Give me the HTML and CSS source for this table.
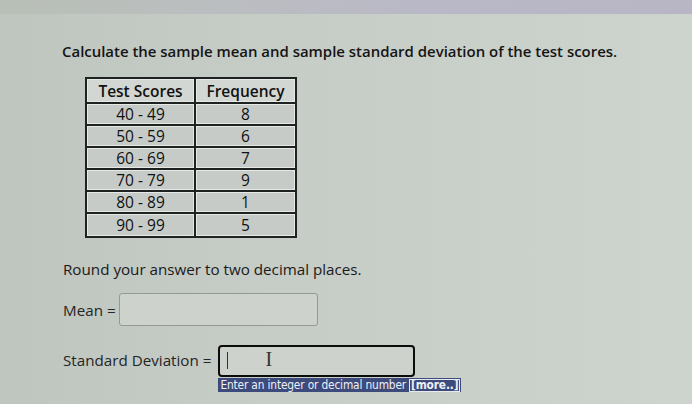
FILE: index.html
```html
<!DOCTYPE html>
<html>
<head>
<meta charset="utf-8">
<link rel="stylesheet" href="styles.css">
</head>
<body>
<div class="topbar"></div>
<main class="page">
  <p class="title">Calculate the sample mean and sample standard deviation of the test scores.</p>
  <table class="freq">
    <thead>
      <tr><th>Test Scores</th><th>Frequency</th></tr>
    </thead>
    <tbody>
      <tr><td>40 - 49</td><td>8</td></tr>
      <tr><td>50 - 59</td><td>6</td></tr>
      <tr><td>60 - 69</td><td>7</td></tr>
      <tr><td>70 - 79</td><td>9</td></tr>
      <tr><td>80 - 89</td><td>1</td></tr>
      <tr><td>90 - 99</td><td>5</td></tr>
    </tbody>
  </table>
  <p class="round">Round your answer to two decimal places.</p>
  <div class="row mean-row">
    <span class="label">Mean =</span>
    <div class="box mean-box"></div>
  </div>
  <div class="row sd-row">
    <span class="label">Standard Deviation =</span>
    <div class="sd-wrap">
      <div class="box sd-box"><span class="caret"></span><span class="ibeam">I</span></div>
      <div class="tip"><span class="tip-text">Enter an integer or decimal number</span><span class="more">[more..]</span></div>
    </div>
  </div>
</main>
</body>
</html>
```

FILE: styles.css
```css
html, body {
  margin: 0;
  padding: 0;
}
body {
  width: 692px;
  height: 404px;
  overflow: hidden;
  background: linear-gradient(90deg, #bfc6bf 0%, #c6ccc6 40%, #cdd3cd 100%);
  font-family: "Open Sans", "Noto Sans", sans-serif;
  color: #161616;
}
.topbar {
  height: 14px;
  background: linear-gradient(90deg, #b8bfb6 0%, #bbbec0 30%, #b9b8c6 60%, #b8b6c4 100%);
}
.page {
  padding: 0 0 0 62px;
}
.title {
  margin: 0;
  padding-top: 27px;
  font-size: 14.95px;
  line-height: 20px;
  font-weight: 600;
  color: #151515;
}
.freq {
  margin: 16px 0 0 23px;
  border-collapse: separate;
  border-spacing: 2px;
  background: #1e2220;
  font-size: 15.5px;
  line-height: 17px;
}
.freq th, .freq td {
  background: #c6cbc8;
  border: 1px solid #e6e9e6;
  text-align: center;
  padding: 1px 0 0;
  height: 17px;
  font-weight: 500;
  color: #111;
}
.freq th {
  background: #d3d7d3;
  font-weight: 600;
  height: 20px;
}
.freq tbody tr:last-child td {
  height: 19px;
}
.freq th:first-child, .freq td:first-child {
  width: 105px;
}
.freq th:last-child, .freq td:last-child {
  width: 97px;
}
.round {
  margin: 21px 0 0 1px;
  font-size: 15.2px;
  line-height: 20px;
  color: #1a1a1a;
}
.row {
  display: flex;
  align-items: center;
  font-size: 15.2px;
  color: #252525;
  margin-left: 1px;
}
.mean-row {
  margin-top: 14px;
  gap: 3px;
}
.mean-box {
  width: 197px;
  height: 31px;
  border: 1px solid #939a94;
  border-radius: 3px;
  background: #cdd2cd;
}
.sd-row {
  margin-top: 19px;
  align-items: flex-start;
  gap: 7px;
}
.sd-row .label {
  margin-top: 5px;
}
.sd-wrap {
  display: flex;
  flex-direction: column;
  align-items: flex-start;
}
.sd-box {
  width: 193px;
  height: 28px;
  border: 2px solid #0c0c0c;
  border-radius: 4px;
  background: #cdd2cd;
  position: relative;
}
.caret {
  position: absolute;
  left: 7px;
  top: 5px;
  width: 1px;
  height: 17px;
  background: #333;
}
.ibeam {
  position: absolute;
  left: 45px;
  top: 1px;
  font-size: 20px;
  font-family: "Liberation Serif", serif;
  color: #333;
}
.tip {
  display: flex;
  align-items: center;
  margin-top: 1px;
  background: #3d4b7c;
  color: #eef0f6;
  font-size: 11.8px;
  line-height: 13px;
  height: 14px;
  padding: 0 1px 0 2px;
  font-family: "DejaVu Sans Condensed", "DejaVu Sans", sans-serif;
  letter-spacing: -0.15px;
}
.more {
  margin-left: 3px;
  border: 1px solid #e8eaf0;
  padding: 0 1px;
  line-height: 11px;
  font-weight: bold;
}
```
